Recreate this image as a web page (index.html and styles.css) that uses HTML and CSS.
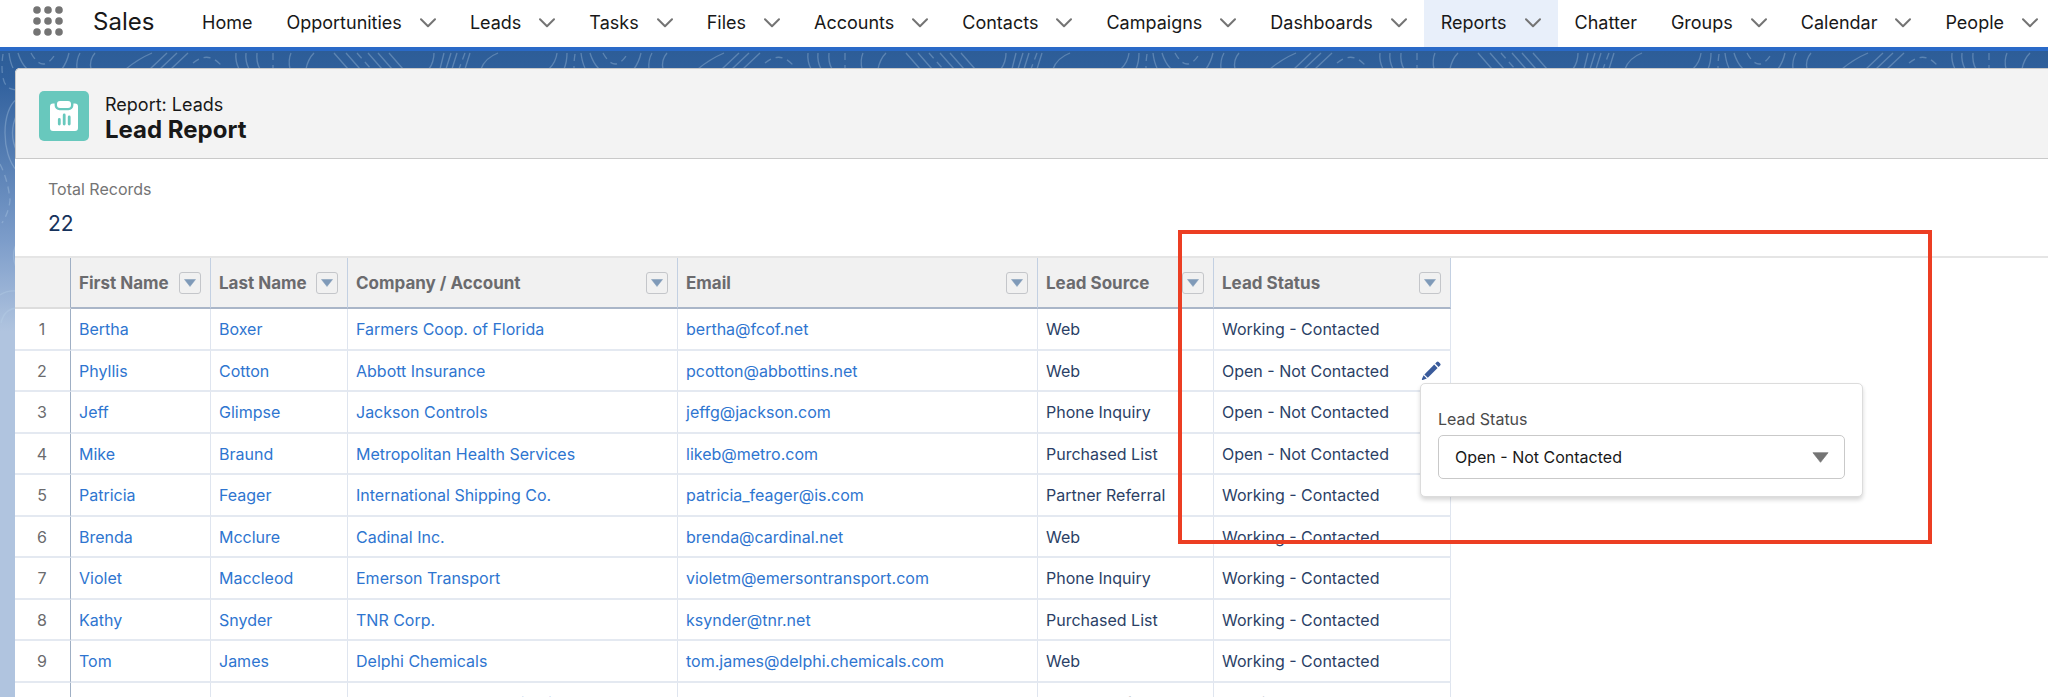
FILE: index.html
```html
<!DOCTYPE html>
<html lang="en">
<head>
    <meta charset="UTF-8">
    <meta name="viewport" content="width=device-width, initial-scale=1.0">
    <title>Lead Report | Sales</title>
    <link rel="stylesheet" href="styles.css">
</head>
<body>
    <svg class="icon-defs" aria-hidden="true">
        <symbol id="chevron" viewBox="0 0 16 10">
            <path d="M1 1.200l7 7 7-7" fill="none" stroke="#747474" stroke-width="2" stroke-linecap="round" stroke-linejoin="round"/>
        </symbol>
        <symbol id="triangle" viewBox="0 0 12 8">
            <path d="M0.5 0.5h11L6 7.5z" fill="currentColor" stroke="currentColor" stroke-width="0.5" stroke-linejoin="round"/>
        </symbol>
    </svg>

    <header class="global-nav">
        <button class="app-launcher" aria-label="App Launcher">
            <svg width="30" height="30" viewBox="0 0 30 30" fill="#747474">
                <circle cx="4" cy="4" r="3.8"/><circle cx="15" cy="4" r="3.8"/><circle cx="26" cy="4" r="3.8"/>
                <circle cx="4" cy="15" r="3.8"/><circle cx="15" cy="15" r="3.8"/><circle cx="26" cy="15" r="3.8"/>
                <circle cx="4" cy="26" r="3.8"/><circle cx="15" cy="26" r="3.8"/><circle cx="26" cy="26" r="3.8"/>
            </svg>
        </button>
        <span class="app-name">Sales</span>
        <nav class="nav-items">
            <a class="nav-item" href="#">Home</a>
            <a class="nav-item" href="#">Opportunities<svg class="chevron"><use href="#chevron"/></svg></a>
            <a class="nav-item" href="#">Leads<svg class="chevron"><use href="#chevron"/></svg></a>
            <a class="nav-item" href="#">Tasks<svg class="chevron"><use href="#chevron"/></svg></a>
            <a class="nav-item" href="#">Files<svg class="chevron"><use href="#chevron"/></svg></a>
            <a class="nav-item" href="#">Accounts<svg class="chevron"><use href="#chevron"/></svg></a>
            <a class="nav-item" href="#">Contacts<svg class="chevron"><use href="#chevron"/></svg></a>
            <a class="nav-item" href="#">Campaigns<svg class="chevron"><use href="#chevron"/></svg></a>
            <a class="nav-item" href="#">Dashboards<svg class="chevron"><use href="#chevron"/></svg></a>
            <a class="nav-item active" href="#">Reports<svg class="chevron"><use href="#chevron"/></svg></a>
            <a class="nav-item" href="#">Chatter</a>
            <a class="nav-item" href="#">Groups<svg class="chevron"><use href="#chevron"/></svg></a>
            <a class="nav-item" href="#">Calendar<svg class="chevron"><use href="#chevron"/></svg></a>
            <a class="nav-item" href="#">People<svg class="chevron"><use href="#chevron"/></svg></a>
        </nav>
    </header>

    <div class="page">
        <svg class="contours" aria-hidden="true">
            <defs>
                <pattern id="contour-tile" width="572" height="320" patternUnits="userSpaceOnUse">
                    <g fill="none" stroke="#bcd3ea" stroke-opacity="0.32" stroke-width="1.3">
                        <path d="M9 2Q10 11 13 17M18 2Q21 12 27 18M69 2Q67 11 62 18M80 2Q76 9 77 18M95 2Q89 9 91 18M152 2Q138 8 126 18M167 2L150 18M177 2L160 18M188 2L171 18"/>
                        <path d="M236 2Q235 10 239 18M246 2Q245 10 249 18M257 2Q256 11 260 18M291 2Q288 9 290 18M314 2Q308 8 306 18M334 2L348 18M346 2L360 18M368 2L382 18M378 2L392 18M389 2L403 18"/>
                        <path d="M434 2Q434 11 429 18M444 2L440 18M451 2L446 18M457 2L452 18M470 2L465 18M498 2Q485 7 481 18M557 2Q556 11 549 18M567 2Q567 11 564 18"/>
                        <path d="M17 48C1 59 1 103 17 120M17 63Q8 82 17 101M17 192Q10 204 17 218M0 244Q7 239 17 240M1 272Q4 258 17 257"/>
                        <path stroke-dasharray="7 5" d="M3 3C1 16 2 29 6 34S12 38 17 39M31 2Q43 24 56 2M193 12Q210 -2 224 18M273 2V18M357 2L371 18M465 2L459 18M0 113Q8 129 10 149Q9 161 2 172"/>
                    </g>
                </pattern>
            </defs>
            <rect width="100%" height="100%" fill="url(#contour-tile)"/>
        </svg>

        <main class="report">
            <div class="report-header">
                <svg class="report-icon" viewBox="0 0 50 50" aria-hidden="true">
                    <rect width="50" height="50" rx="5" fill="#68c8bd"/>
                    <rect x="18" y="10" width="14" height="7" rx="3" fill="#fff"/>
                    <path fill="#fff" d="M14 12.5h1.6v1.8a5 5 0 0 0 5 5h8.8a5 5 0 0 0 5-5v-1.8H36a3 3 0 0 1 3 3V37a3 3 0 0 1-3 3H14a3 3 0 0 1-3-3V15.500a3 3 0 0 1 3-3z"/>
                    <path d="M20.300 28.500v4.500M25.200 24v9M30.200 26v7" stroke="#68c8bd" stroke-width="2.800" stroke-linecap="round"/>
                </svg>
                <div class="report-heading">
                    <div class="report-type">Report: Leads</div>
                    <h1 class="report-title">Lead Report</h1>
                </div>
            </div>

            <div class="summary">
                <div class="summary-label">Total Records</div>
                <div class="summary-value">22</div>
            </div>

            <div class="grid">
                <table class="leads">
                    <colgroup>
                        <col class="col-num"><col class="col-first"><col class="col-last"><col class="col-company">
                        <col class="col-email"><col class="col-source"><col class="col-status">
                    </colgroup>
                    <thead>
                        <tr>
                            <th></th>
                            <th><div class="th-inner">First Name<button class="menu-btn" aria-label="First Name menu"><svg><use href="#triangle"/></svg></button></div></th>
                            <th><div class="th-inner">Last Name<button class="menu-btn" aria-label="Last Name menu"><svg><use href="#triangle"/></svg></button></div></th>
                            <th><div class="th-inner">Company / Account<button class="menu-btn" aria-label="Company menu"><svg><use href="#triangle"/></svg></button></div></th>
                            <th><div class="th-inner">Email<button class="menu-btn" aria-label="Email menu"><svg><use href="#triangle"/></svg></button></div></th>
                            <th><div class="th-inner">Lead Source<button class="menu-btn" aria-label="Lead Source menu"><svg><use href="#triangle"/></svg></button></div></th>
                            <th><div class="th-inner">Lead Status<button class="menu-btn" aria-label="Lead Status menu"><svg><use href="#triangle"/></svg></button></div></th>
                        </tr>
                    </thead>
                    <tbody>
                        <tr>
                            <td>1</td>
                            <td><a href="#">Bertha</a></td>
                            <td><a href="#">Boxer</a></td>
                            <td><a href="#">Farmers Coop. of Florida</a></td>
                            <td><a href="#">bertha@fcof.net</a></td>
                            <td>Web</td>
                            <td>Working - Contacted</td>
                        </tr>
                        <tr>
                            <td>2</td>
                            <td><a href="#">Phyllis</a></td>
                            <td><a href="#">Cotton</a></td>
                            <td><a href="#">Abbott Insurance</a></td>
                            <td><a href="#">pcotton@abbottins.net</a></td>
                            <td>Web</td>
                            <td class="editing">
                                <div class="edit-cell">
                                    Open - Not Contacted
                                    <button class="edit-btn" aria-label="Edit Lead Status">
                                        <svg width="20" height="20" viewBox="0 0 20 20" fill="#3a5b9b">
                                            <path d="M13.200 3.600l3.400 3.400-9.800 9.800-3.400-3.400z"/>
                                            <path d="M14.200 2.600l1.500-1.500a1.400 1.400 0 0 1 2 0l1.400 1.400a1.400 1.400 0 0 1 0 2l-1.500 1.500z"/>
                                            <path d="M2.600 14.300l3.200 3.200-4 1.500a.7.7 0 0 1-.9-.9z"/>
                                        </svg>
                                    </button>
                                </div>
                                <div class="popover">
                                    <label for="lead-status">Lead Status</label>
                                    <div class="select-wrapper">
                                        <select id="lead-status">
                                            <option>Open - Not Contacted</option>
                                            <option>Working - Contacted</option>
                                        </select>
                                        <svg class="select-arrow" aria-hidden="true"><use href="#triangle"/></svg>
                                    </div>
                                </div>
                            </td>
                        </tr>
                        <tr>
                            <td>3</td>
                            <td><a href="#">Jeff</a></td>
                            <td><a href="#">Glimpse</a></td>
                            <td><a href="#">Jackson Controls</a></td>
                            <td><a href="#">jeffg@jackson.com</a></td>
                            <td>Phone Inquiry</td>
                            <td>Open - Not Contacted</td>
                        </tr>
                        <tr>
                            <td>4</td>
                            <td><a href="#">Mike</a></td>
                            <td><a href="#">Braund</a></td>
                            <td><a href="#">Metropolitan Health Services</a></td>
                            <td><a href="#">likeb@metro.com</a></td>
                            <td>Purchased List</td>
                            <td>Open - Not Contacted</td>
                        </tr>
                        <tr>
                            <td>5</td>
                            <td><a href="#">Patricia</a></td>
                            <td><a href="#">Feager</a></td>
                            <td><a href="#">International Shipping Co.</a></td>
                            <td><a href="#">patricia_feager@is.com</a></td>
                            <td>Partner Referral</td>
                            <td>Working - Contacted</td>
                        </tr>
                        <tr>
                            <td>6</td>
                            <td><a href="#">Brenda</a></td>
                            <td><a href="#">Mcclure</a></td>
                            <td><a href="#">Cadinal Inc.</a></td>
                            <td><a href="#">brenda@cardinal.net</a></td>
                            <td>Web</td>
                            <td>Working - Contacted</td>
                        </tr>
                        <tr>
                            <td>7</td>
                            <td><a href="#">Violet</a></td>
                            <td><a href="#">Maccleod</a></td>
                            <td><a href="#">Emerson Transport</a></td>
                            <td><a href="#">violetm@emersontransport.com</a></td>
                            <td>Phone Inquiry</td>
                            <td>Working - Contacted</td>
                        </tr>
                        <tr>
                            <td>8</td>
                            <td><a href="#">Kathy</a></td>
                            <td><a href="#">Snyder</a></td>
                            <td><a href="#">TNR Corp.</a></td>
                            <td><a href="#">ksynder@tnr.net</a></td>
                            <td>Purchased List</td>
                            <td>Working - Contacted</td>
                        </tr>
                        <tr>
                            <td>9</td>
                            <td><a href="#">Tom</a></td>
                            <td><a href="#">James</a></td>
                            <td><a href="#">Delphi Chemicals</a></td>
                            <td><a href="#">tom.james@delphi.chemicals.com</a></td>
                            <td>Web</td>
                            <td>Working - Contacted</td>
                        </tr>
                        <tr>
                            <td>10</td>
                            <td><a href="#">Shelly</a></td>
                            <td><a href="#">Brownell</a></td>
                            <td><a href="#">Western Telecommunications Corp.</a></td>
                            <td><a href="#">shellyb@westerntelecom.com</a></td>
                            <td>Partner Referral</td>
                            <td>Working - Contacted</td>
                        </tr>
                    </tbody>
                </table>
                <div class="highlight"></div>
            </div>
        </main>
    </div>
</body>
</html>
```

FILE: styles.css
```css
* {
    box-sizing: border-box;
    margin: 0;
    padding: 0;
}

body {
    height: 100vh;
    display: flex;
    flex-direction: column;
    overflow: hidden;
    font-family: Inter, "Liberation Sans", sans-serif;
    font-size: 16px;
    line-height: 24px;
    color: #181818;
    background-color: #b0c4df;
}

a {
    color: #2e75d0;
    text-decoration: none;
}

button {
    border: none;
    background: none;
    cursor: pointer;
}

.icon-defs {
    display: none;
}

/* top navigation */
.global-nav {
    flex: none;
    display: flex;
    align-items: stretch;
    height: 51px;
    padding-left: 33px;
    background-color: #fff;
    border-bottom: 4px solid #2a6ac8;
}

.app-launcher {
    display: flex;
    padding-top: 6px;
}

.app-name {
    flex: none;
    width: 122px;
    padding: 10px 0 0 30px;
    font-size: 24px;
}

.nav-items {
    display: flex;
}

.nav-item {
    display: flex;
    align-items: center;
    padding: 0 17px 2px;
    font-size: 18px;
    color: #181818;
    white-space: nowrap;
}

.nav-item.active {
    background-color: #e8effa;
}

.chevron {
    flex: none;
    width: 16px;
    height: 10px;
    margin-left: 18px;
}

/* page background */
.page {
    position: relative;
    flex: 1;
    padding: 17px 0 0 15px;
    background: linear-gradient(#2d5d97, #31619e 30px, #7d9dca 190px, #b0c4df 280px);
}

.contours {
    position: absolute;
    top: 0;
    left: 0;
    width: 100%;
    height: 280px;
}

/* report */
.report {
    position: relative;
    height: 100%;
    background-color: #fff;
    border-top-left-radius: 5px;
}

.report-header {
    display: flex;
    align-items: center;
    gap: 16px;
    height: 91px;
    padding: 5px 23px 0;
    background-color: #f3f3f3;
    border: 1px solid #c9c9c9;
    border-right: none;
    border-top-left-radius: 5px;
}

.report-icon {
    width: 50px;
    height: 50px;
}

.report-heading {
    padding-top: 4px;
}

.report-type {
    font-size: 18px;
}

.report-title {
    font-size: 24px;
    line-height: 26px;
    font-weight: 700;
}

.summary {
    height: 97px;
    padding: 18px 33px 0;
}

.summary-label {
    color: #747474;
}

.summary-value {
    margin-top: 11px;
    font-size: 21px;
    color: #16325c;
}

/* leads table */
.grid {
    position: relative;
    border-top: 2px solid #e5e5e5;
}

.leads {
    width: 1436px;
    table-layout: fixed;
    border-collapse: separate;
    border-spacing: 0;
    color: #2b3f66;
}

.col-num { width: 56px; }
.col-first { width: 140px; }
.col-last { width: 137px; }
.col-company { width: 330px; }
.col-email { width: 360px; }
.col-source { width: 176px; }
.col-status { width: 237px; }

.leads th {
    height: 51px;
    padding: 0 9px 0 8px;
    font-size: 17px;
    font-weight: 700;
    color: #6b6b6e;
    background-color: #f1f1f1;
    border-right: 1px solid #c3d0e2;
    border-bottom: 2px solid #aab6c8;
}

.leads th:first-child {
    border-bottom-color: #dddddd;
}

.th-inner {
    display: flex;
    align-items: center;
    justify-content: space-between;
    white-space: nowrap;
}

.menu-btn {
    display: flex;
    align-items: center;
    justify-content: center;
    width: 22px;
    height: 22px;
    border: 1px solid #c4c6ca;
    border-radius: 3px;
    color: #7f9ab8;
}

.menu-btn svg {
    width: 12px;
    height: 8px;
}

.leads td {
    height: 42px;
    padding: 0 9px 0 8px;
    border-right: 1px solid #dfe5ef;
    border-bottom: 2px solid #e4e9f1;
    white-space: nowrap;
}

.leads tr:nth-child(even) td {
    height: 41px;
}

.leads th:first-child,
.leads td:first-child {
    border-right: 1px solid #9fafc4;
}

.leads td:first-child {
    text-align: center;
    color: #6b6b6e;
}

.editing {
    position: relative;
}

.edit-cell {
    display: flex;
    align-items: center;
    justify-content: space-between;
}

.edit-btn {
    display: flex;
}

/* inline edit popover */
.popover {
    position: absolute;
    z-index: 1;
    top: 32px;
    left: 206px;
    width: 443px;
    padding: 23px 17px 17px;
    background-color: #fff;
    border: 1px solid #dcdcdc;
    border-radius: 5px;
    box-shadow: 0 3px 4px rgba(0, 0, 0, 0.16);
}

.popover label {
    display: block;
    margin-bottom: 4px;
    color: #4a4a4a;
}

.select-wrapper {
    position: relative;
}

.select-wrapper select {
    width: 100%;
    height: 44px;
    padding: 0 16px;
    appearance: none;
    font: inherit;
    color: #181818;
    background-color: #fff;
    border: 1px solid #c9c9c9;
    border-radius: 5px;
}

.select-arrow {
    position: absolute;
    top: 17px;
    right: 16px;
    width: 17px;
    height: 11px;
    color: #747474;
    pointer-events: none;
}

/* red callout around the edited column */
.highlight {
    position: absolute;
    z-index: 2;
    top: -28px;
    left: 1163px;
    width: 754px;
    height: 314px;
    border: 4px solid #ec3e23;
    pointer-events: none;
}
```
